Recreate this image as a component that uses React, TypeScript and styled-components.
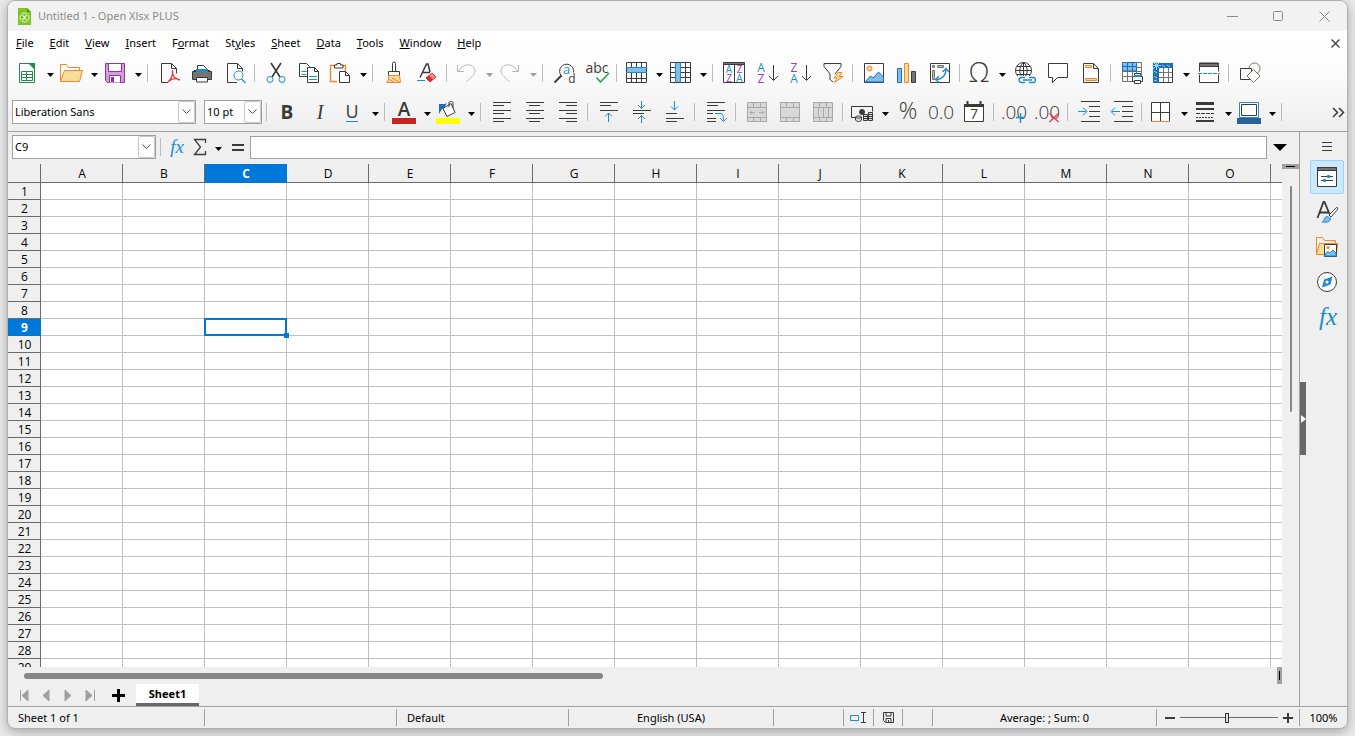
import React, { ReactNode } from "react";
import styled, { createGlobalStyle, css } from "styled-components";

const ink = "#3a3a38";
const blue = "#1e8bcd";
const accent = "#0078d7";
const line = "#a0a0a0";
const uiFont = `"Noto Sans", "Open Sans", sans-serif`;
const gridFont = `"Open Sans", "Noto Sans", sans-serif`;

const GlobalStyle = createGlobalStyle`
  * { box-sizing: border-box; }
  body {
    margin: 0;
    background: #ebebeb;
    color: #000;
    font-family: ${uiFont};
    font-size: 11px;
    line-height: 16px;
  }
  button, input, select { font: inherit; color: inherit; }
  button { background: none; border: 0; padding: 0; }
`;

const Desktop = styled.div`
  height: 100vh;
  min-height: 400px;
  padding: 0 7px 7px;
  overflow: hidden;
`;

const Window = styled.div`
  display: flex;
  flex-direction: column;
  height: 100%;
  border: 1px solid #b0b0b0;
  border-radius: 8px;
  background: #efefef;
  box-shadow: 0 3px 12px rgba(0, 0, 0, 0.3);
  overflow: hidden;
`;

const TitleBar = styled.header`
  display: flex;
  align-items: center;
  flex: none;
  height: 30px;
  padding-left: 10px;
  background: #f2f2f2;
  color: #8a8a8a;
`;

const Title = styled.h1`
  flex: 1;
  margin: 0 0 0 7px;
  font-size: 11px;
  font-weight: 400;
`;

const CaptionButton = styled.button`
  display: grid;
  place-items: center;
  width: 46px;
  height: 30px;
`;

const CommandArea = styled.div`
  flex: none;
  border-bottom: 1px solid ${line};
  background: linear-gradient(#fff, #fcfcfc 40%, #eeeeee);
`;

const MenuBar = styled.nav`
  display: flex;
  align-items: center;
  gap: 16px;
  height: 24px;
  padding: 0 7px 0 8px;
`;

const MenuItem = styled.button`
  height: 20px;
`;

const MenuClose = styled.button`
  display: grid;
  margin-left: auto;
`;

const Toolbar = styled.div<{ $tall?: boolean }>`
  display: flex;
  align-items: center;
  height: ${(p) => (p.$tall ? 40 : 36)}px;
  padding: ${(p) => (p.$tall ? "2px 2px 0 4px" : "0 2px 0 3px")};
`;

const ToolButton = styled.button`
  flex: none;
  display: flex;
  align-items: center;
  width: 33px;
  height: 32px;
  padding-left: 6px;
`;

const SplitButton = styled(ToolButton)<{ $off?: boolean }>`
  width: 44px;
  padding-left: 4px;
  gap: 8px;
  color: ${(p) => (p.$off ? "#a0a0a0" : "#000")};
`;

const Glyph = styled.svg`
  display: block;
  flex: none;
  width: 24px;
  height: 24px;
  fill: none;
  stroke: ${ink};
  overflow: visible;
  text { stroke: none; fill: ${ink}; text-anchor: middle; font-family: ${gridFont}; }
`;

const Mark = styled.svg`
  display: block;
  flex: none;
  fill: none;
  stroke: currentColor;
`;

const Arrow = styled.svg`
  display: block;
  flex: none;
  width: 7px;
  height: 4px;
  margin-top: 4px;
  fill: currentColor;
`;

const Separator = styled.span`
  flex: none;
  width: 8px;
  height: 18px;
  padding-left: 4px;
  &::before { content: ""; display: block; width: 1px; height: 100%; background: #bcbcbc; }
`;

const Combo = styled.div<{ $width: number }>`
  display: flex;
  flex: none;
  position: relative;
  width: ${(p) => p.$width}px;
  height: 24px;
  border: 1px solid #a0a0a0;
  background: #fff;
`;

const comboText = css`
  flex: 1;
  min-width: 0;
  width: 100%;
  padding: 0 2px;
  border: 0;
  outline: 0;
  background: transparent;
`;

const ComboSelect = styled.select`
  ${comboText}
  appearance: none;
`;

const ComboInput = styled.input`
  ${comboText}
`;

const ComboDrop = styled.span`
  position: absolute;
  top: 0;
  right: 0;
  display: grid;
  place-items: center;
  width: 17px;
  height: 100%;
  border: 1px solid #c8c8c8;
  border-radius: 2px;
  background: #fdfdfd;
  color: #555;
  pointer-events: none;
`;

const ComboGap = styled.span`
  flex: none;
  width: 8px;
`;

const Overflow = styled.button`
  display: grid;
  margin-left: auto;
`;

const Body = styled.div`
  display: flex;
  flex: 1;
  min-height: 0;
`;

const Workspace = styled.main`
  display: flex;
  flex-direction: column;
  flex: 1;
  min-width: 0;
`;

const FormulaBar = styled.div`
  display: flex;
  align-items: center;
  flex: none;
  height: 32px;
  padding: 0 6px 2px 4px;
`;

const FormulaButton = styled.button<{ $width: number; $start?: boolean }>`
  display: flex;
  flex: none;
  align-items: center;
  justify-content: ${(p) => (p.$start ? "flex-start" : "center")};
  gap: 3px;
  width: ${(p) => p.$width}px;
  height: 24px;
`;

const FormulaInput = styled.input`
  flex: 1;
  min-width: 0;
  height: 23px;
  padding: 0 4px;
  border: 1px solid #a0a0a0;
  outline: 0;
  background: #fff;
`;

const SheetArea = styled.div`
  display: flex;
  flex: 1;
  min-height: 0;
`;

const GridView = styled.div`
  flex: 1;
  min-width: 0;
  overflow: hidden;
  background: #fff;
`;

const Grid = styled.table`
  width: 100%;
  table-layout: fixed;
  border-spacing: 0;
  font-family: ${gridFont};
  font-size: 12px;
  line-height: 14px;
  th:last-child, td:last-child { border-right: 0; }
`;

const headCell = css<{ $on?: boolean }>`
  padding: 2px 0 0 1px;
  border: solid #6a6a6a;
  border-width: 0 1px 1px 0;
  background: #efefef;
  text-align: center;
  font-weight: 400;
  ${(p) => p.$on && css`
    border-color: ${accent};
    background: ${accent};
    color: #fff;
    font-weight: 700;
  `}
`;

const ColumnHead = styled.th<{ $on?: boolean }>`
  ${headCell}
  height: 19px;
`;

const RowHead = styled.th<{ $on?: boolean }>`
  ${headCell}
  height: 17px;
`;

const Cell = styled.td<{ $on?: boolean }>`
  position: ${(p) => (p.$on ? "relative" : "static")};
  padding: 0;
  border: solid #c0c0c0;
  border-width: 0 1px 1px 0;
`;

const CellCursor = styled.div`
  position: absolute;
  inset: -1px;
  border: 2px solid ${accent};
  &::after {
    content: "";
    position: absolute;
    right: -4px;
    bottom: -4px;
    width: 5px;
    height: 5px;
    background: ${accent};
  }
`;

const VerticalScroll = styled.div`
  display: flex;
  flex-direction: column;
  flex: none;
  align-items: center;
  width: 17px;
`;

const SplitTop = styled.div`
  display: grid;
  place-items: center;
  width: 100%;
  height: 5px;
  margin-bottom: 17px;
  background: #a0a0a0;
  &::before { content: ""; width: 9px; height: 1px; background: #000; }
`;

const VerticalThumb = styled.div`
  width: 2px;
  height: 45%;
  border-radius: 1px;
  background: #868686;
`;

const HorizontalScroll = styled.div`
  display: flex;
  align-items: center;
  flex: none;
  height: 17px;
  padding: 0 17px 0 16px;
`;

const HorizontalThumb = styled.div`
  width: 46%;
  height: 6px;
  border-radius: 3px;
  background: #868686;
`;

const SplitSide = styled.div`
  display: grid;
  place-items: center;
  width: 5px;
  height: 17px;
  margin-left: auto;
  background: #a0a0a0;
  &::before { content: ""; width: 1px; height: 9px; background: #000; }
`;

const TabBar = styled.div`
  display: flex;
  align-items: center;
  flex: none;
  height: 22px;
  padding-left: 5px;
`;

const TabNav = styled.button`
  display: grid;
  place-items: center;
  width: 22px;
  height: 22px;
  color: #a0a0a0;
`;

const AddSheet = styled(TabNav)`
  width: 35px;
  color: #000;
`;

const SheetTab = styled.button`
  width: 63px;
  height: 22px;
  padding-top: 1px;
  border-bottom: 3px solid #686868;
  background: #fff;
  font-weight: 700;
  line-height: 18px;
`;

const Sidebar = styled.aside`
  position: relative;
  display: flex;
  flex-direction: column;
  align-items: center;
  flex: none;
  gap: 1px;
  width: 48px;
  padding: 0 0 0 7px;
  border-left: 1px solid ${line};
`;

const SideMenu = styled.button`
  display: grid;
  place-items: center;
  width: 34px;
  height: 27px;
  padding-top: 2px;
`;

const SideButton = styled.button<{ $on?: boolean }>`
  display: grid;
  place-items: center;
  width: 34px;
  height: 34px;
  border: 1px solid ${(p) => (p.$on ? "#99d1ff" : "transparent")};
  border-radius: 2px;
  background: ${(p) => (p.$on ? "#cce8ff" : "transparent")};
`;

const SideHandle = styled.button`
  position: absolute;
  left: 0;
  top: 250px;
  display: grid;
  place-items: center;
  width: 6px;
  height: 73px;
  background: #686868;
  color: #fff;
`;

const StatusBar = styled.footer`
  display: flex;
  align-items: center;
  flex: none;
  height: 22px;
  border-top: 1px solid ${line};
`;

const StatusCell = styled.div<{ $width?: number; $align?: string; $last?: boolean }>`
  display: flex;
  align-items: center;
  justify-content: ${(p) => p.$align || "center"};
  ${(p) => (p.$width ? `flex: 0 1 ${p.$width}px;` : "flex: 1;")}
  min-width: 0;
  height: 17px;
  padding: 0 ${(p) => (p.$align ? 10 : 0)}px;
  border-right: ${(p) => (p.$last ? "0" : `1px solid ${line}`)};
  white-space: nowrap;
`;

const ZoomCell = styled(StatusCell)`
  gap: 5px;
  padding: 0 6px 0 8px;
`;

const ZoomSlider = styled.input`
  flex: 1;
  min-width: 0;
  height: 12px;
  margin: 0;
  appearance: none;
  background: linear-gradient(#6b6b6b, #6b6b6b) center / 100% 1px no-repeat;
  &::-webkit-slider-thumb {
    appearance: none;
    width: 4px;
    height: 10px;
    border: 1px solid #333;
    background: #ddd;
  }
`;

/* ---------- icons, drawn on a 24px canvas ---------- */

const alignRows = [2.5, 5.5, 10.5, 13.5, 18.5, 21.5];

function alignPath(kind: "left" | "center" | "right") {
  return alignRows
    .map((y, i) => {
      const w = i % 2 ? 11 : 18;
      const x = kind === "left" ? 3 : kind === "right" ? 21 - w : 3 + Math.floor((18 - w) / 2);
      return `M${x} ${y}h${w}`;
    })
    .join("");
}

const violet = "#a33bae";

const icons: Record<string, ReactNode> = {
  newSheet: (
    <>
      <path d="M4.500 2.500h10l5 5v14h-15z" stroke="#1f8b4c" fill="#fff" />
      <path d="M13 2h7v7z" fill="#1f8b4c" stroke="none" />
      <path d="M6.500 10.500h11v9h-11zM6.500 13.500h11M6.500 16.500h11M11.500 10.500v9" stroke="#1f8b4c" />
    </>
  ),
  open: (
    <>
      <path d="M1.500 20.500v-17h6l2 3h11v3" stroke="#ed8733" />
      <path d="M5.500 9.500h18l-3 11h-19z" fill="#fbdd98" stroke="#ed8733" />
    </>
  ),
  save: (
    <>
      <path d="M2.500 2.500h19v19h-17l-2-2z" fill="#d59adf" stroke="#92349c" />
      <path d="M5.500 2.500h13v8h-13z" fill="#fff" stroke="#92349c" />
      <path d="M6.500 21.500v-7h11v7" fill="#fff" stroke="#92349c" />
      <path d="M8 16h3v5h-3z" fill="#92349c" stroke="none" />
    </>
  ),
  pdf: (
    <>
      <path d="M11 21.500h-6.500v-19h10l5 5v5M14.500 2.500v5h5" />
      <path d="M15.500 9v3c0 4-2.500 7-4.500 9M15.500 12c.5 3.500 3.500 6 7.500 7M11.500 20.500c3-3 7-3.500 11-2" stroke="#e8393f" strokeWidth="1.300" />
    </>
  ),
  print: (
    <>
      <path d="M7.500 10v-5.500h6l3 3v2.500" fill="#fff" />
      <path d="M4 9.500h16M2.500 10.500h19v8h-19z" fill="#75756f" />
      <path d="M6 8h12v3h-12z" fill={blue} stroke="none" />
      <path d="M6.500 16.500h11v4.500h-11z" fill="#fff" />
    </>
  ),
  preview: (
    <>
      <path d="M14 21.500h-9.500v-19h10l5 5v3M14.500 2.500v5h5" />
      <circle cx="15.500" cy="14.500" r="4.500" fill="#fff" stroke={blue} />
      <path d="M18.500 18l4 4" stroke={blue} strokeWidth="1.300" />
    </>
  ),
  cut: (
    <>
      <path d="M7 2l9 14M17 2l-9 14" strokeWidth="1.600" />
      <circle cx="6" cy="18.500" r="3" stroke={blue} />
      <circle cx="18" cy="18.500" r="3" stroke={blue} />
    </>
  ),
  copy: (
    <>
      <path d="M10 15.500h-7.500v-13h7l3 3v2" fill="#fff" />
      <path d="M4.500 10.500h5M4.500 13.500h5" stroke={blue} />
      <path d="M10.500 6.500h7l4 4v11h-11z" fill="#fff" />
      <path d="M17.500 6.500v4h4" />
      <path d="M12 15.500h8M12 18.500h8" stroke={blue} />
    </>
  ),
  paste: (
    <>
      <path d="M9 20.500h-6.500v-16h15v6" stroke="#ed8733" fill="#fbfbfb" strokeWidth="1.400" />
      <path d="M6.500 7v-3h2.500v-1.500h3.500v1.500h2.500v3z" fill="#fff" />
      <path d="M11.500 10.500h6l4 4v7h-10z" fill="#fff" />
      <path d="M17.500 10.500v4h4" />
    </>
  ),
  brush: (
    <>
      <path d="M10.500 10.500v-8a1.500 1.500 0 0 1 3 0v8" fill="#fff" />
      <path d="M6.500 14.500v-4h11v4" fill="#fff" />
      <path d="M6.500 14.500h11l1 7h-14l2-3z" fill="#fbdd98" stroke="#ed8733" />
      <path d="M6 18l6 3M10 17l7 4" stroke="#ed8733" />
    </>
  ),
  clear: (
    <>
      <path d="M5 16.500L11.500 3h1.500L15 11M8 11.500h7" strokeWidth="1.500" />
      <path d="M2 19.500h8" stroke={blue} />
      <path d="M11 17l6-5 4 4-6 5z" fill="#f4848a" stroke="#e23a3f" />
      <path d="M11 17l3-2.500 4 4-3 2.500z" fill="#dd2830" stroke="none" />
    </>
  ),
  undo: <path d="M3.500 4v6.500h6.500M3.500 10.500l5.500-5c4.500-3.500 12-1.500 12 4.500 0 2-1 3.500-2 4.500l-6.500 6.500" stroke="#b8b8b8" />,
  redo: <path d="M20.500 4v6.500h-6.500M20.500 10.500l-5.500-5c-4.500-3.500-12-1.500-12 4.500 0 2 1 3.500 2 4.500l6.500 6.500" stroke="#b8b8b8" />,
  find: (
    <>
      <path d="M10 15.500a7 7 0 1 1 11.500-4" />
      <path d="M9.500 14.500l-7 7" strokeWidth="2" />
      <text x="14.500" y="13" fontSize="13" style={{ fill: blue }}>a</text>
      <text x="20" y="22" fontSize="12">d</text>
    </>
  ),
  spell: (
    <>
      <text x="12" y="12" fontSize="14">abc</text>
      <path d="M11.500 16.500l4 4.500 8.500-9" stroke="#26a65b" strokeWidth="1.600" />
    </>
  ),
  rows: (
    <>
      <path d="M2.500 1.500h20v20h-20zM2.500 17.500h20M7.500 2v20M12.500 2v20M17.500 2v20" />
      <path d="M3 7h19v5h-19z" fill="#7fbdec" stroke="none" />
      <path d="M2 6.500h21M2 11.500h21" stroke={blue} />
    </>
  ),
  cols: (
    <>
      <path d="M2.500 1.500h20v20h-20zM17.500 2v20M2 6.500h20M2 11.500h20M2 16.500h20" />
      <path d="M8 2h5v19h-5z" fill="#7fbdec" stroke="none" />
      <path d="M7.500 1v21M12.500 1v21" stroke={blue} />
    </>
  ),
  sort: (
    <>
      <path d="M1.500 2.500h21v19h-21zM12.500 4v18" fill="#fff" />
      <path d="M1.500 1.500h21v2h-21z" fill="#75756f" />
      <text fontSize="10">
        <tspan x="7" y="12" fill={blue}>A</tspan>
        <tspan x="17.500" y="12" fill={violet}>Z</tspan>
        <tspan x="7" y="20.500" fill={violet}>Z</tspan>
        <tspan x="17.500" y="20.500" fill={blue}>A</tspan>
      </text>
    </>
  ),
  sortAsc: (
    <>
      <text fontSize="12">
        <tspan x="6" y="10.500" fill={blue}>A</tspan>
        <tspan x="6" y="22" fill={violet}>Z</tspan>
      </text>
      <path d="M18.500 4v15M14 15l4.500 4.500 4.500-4.500" />
    </>
  ),
  sortDesc: (
    <>
      <text fontSize="12">
        <tspan x="6" y="10.500" fill={violet}>Z</tspan>
        <tspan x="6" y="22" fill={blue}>A</tspan>
      </text>
      <path d="M18.500 4v15M14 15l4.500 4.500 4.500-4.500" />
    </>
  ),
  filter: (
    <>
      <path d="M14 13l6-7.500v-3h-17v3l6 7.500v6" />
      <path d="M9.500 19l2.500 2" />
      <path d="M17 11.500h4l-3 4h4l-8.500 6 2.500-4.500h-3z" fill="#fbdd98" stroke="#ed8733" />
    </>
  ),
  image: (
    <>
      <path d="M2.500 2.500h19v19h-19z" fill="#fff" />
      <circle cx="7.500" cy="7.500" r="2.500" fill="#fbcf8a" stroke="#ed8733" />
      <path d="M3 21l5.500-6 2.500 2 5.500-6 5 5v5z" fill="#7fbdec" stroke="#1b6db5" />
    </>
  ),
  chart: (
    <>
      <path d="M2.500 7.500h4v14h-4z" fill="#7fbdec" stroke="#1b6db5" />
      <path d="M9.500 2.500h4v19h-4z" fill="#fbdd98" stroke="#ed8733" />
      <path d="M16.500 10.500h4v11h-4z" fill="#75756f" />
    </>
  ),
  pivot: (
    <>
      <path d="M2.500 2.500h19v19h-19z" fill="#fff" />
      <path d="M4.500 4.500h2v2h-2zM9.500 4.500h6v2h-6zM4.500 9.500h2v9h-2z" stroke="#75756f" fill="#bbb" />
      <path d="M8 18.500c6 0 10-4 10-10.500M14.500 11l3.500-3.500 3 3.500M11 15l-3.500 3.500 3.500 3" stroke={blue} strokeWidth="1.300" />
    </>
  ),
  omega: <text x="12" y="21" fontSize="27" fontWeight="300">Ω</text>,
  link: (
    <>
      <circle cx="10.500" cy="9.500" r="8" />
      <path d="M2.500 9.500h16M10.500 1.500v16M4 5.500h13M4 13.500h13M10.500 1.500c-5 4-5 12 0 16M10.500 1.500c5 4 5 12 0 16" />
      <path d="M5 15h18v7h-18z" fill="#fafafa" stroke="none" />
      <path d="M12 16.500h-3.500a2.500 2.500 0 0 0 0 5h3.500M16 16.500h4a2.500 2.500 0 0 1 0 5h-4M10 19h9" stroke={blue} strokeWidth="1.300" />
    </>
  ),
  comment: <path d="M2.500 2.500h19v14h-10l-5 5v-5h-4z" fill="#fff" />,
  header: (
    <>
      <path d="M4.500 2.500h10l5 5v14h-15z" fill="#fff" />
      <path d="M14.500 2.500v5h5" />
      <path d="M6.500 4.500h6v2h-6zM6.500 17.500h11v2h-11z" fill="#fbdd98" stroke="#ed8733" />
    </>
  ),
  printArea: (
    <>
      <path d="M2.500 1.500h19v19h-19zM2.500 15.500h19M7.500 10v10M12.500 10v10M16.500 2v18M3 10.500h18M3 6.500h18" stroke="#75756f" fill="#fff" />
      <path d="M2.500 1.500h14v8.500h-14z" fill="#7fbdec" stroke="#1b6db5" />
      <path d="M2.500 5.500h14M7.500 1.500v8.500M12.500 1.500v8.500" stroke="#1b6db5" />
      <path d="M14.500 16v-3.500h6v3.500M12.500 15.500h10v5h-10z" fill="#fff" />
      <path d="M14 14h7v2h-7z" fill={blue} stroke="none" />
      <path d="M14.500 19.500h6v3h-6z" fill="#fff" />
    </>
  ),
  freeze: (
    <>
      <path d="M7 6.500h14.500v15h-14.500z" fill="#fff" />
      <path d="M12.500 7v14M17.500 7v14M8 11.500h13M8 16.500h13" stroke="#75756f" />
      <path d="M2 2h20v5h-14v15h-6z" fill="#1a70bb" stroke="none" />
      <path d="M11 4l3 2M16 4l3 2M3 10l3 2M3 15l3 2M3 20l3-1" stroke="#9fd0f5" />
      <path d="M5.500 0v9M1 4.500h9M2 1l7 7M9 1l-7 7" stroke="#8fd0ff" />
    </>
  ),
  split: (
    <>
      <path d="M2.500 10.500v-8.500h19v8.500M2.500 13.500v8h19v-8" fill="#fff" />
      <path d="M2.500 2.500h19v3h-19z" fill="#75756f" />
      <path d="M1 12.500h22" stroke={blue} strokeDasharray="4 1" />
    </>
  ),
  shapes: (
    <>
      <circle cx="16.500" cy="7.500" r="5.500" stroke="#75756f" fill="#fafafa" />
      <path d="M2.500 7.500h11v11h-11z" fill="#fafafa" />
      <path d="M15.500 8.500l6.500 6.500-6.500 6.500-6.500-6.500z" stroke="#75756f" fill="#fafafa" />
    </>
  ),
  bold: <text x="11" y="19" fontSize="19" fontWeight="700">B</text>,
  italic: <text x="11" y="19" fontSize="20" style={{ fontFamily: '"Liberation Serif", serif', fontStyle: "italic" }}>I</text>,
  underline: (
    <>
      <text x="12" y="18" fontSize="18">U</text>
      <path d="M6 21.500h12" stroke={blue} />
    </>
  ),
  fontColor: (
    <>
      <text x="12" y="16" fontSize="19" fontWeight="600">A</text>
      <path d="M0 18h24v6h-24z" fill="#c9211e" stroke="none" />
    </>
  ),
  fillColor: (
    <>
      <path d="M0 18h24v6h-24z" fill="#ffff00" stroke="none" />
      <path d="M3 14v-10h6l2-1-3 5-2 1z" fill="#1b6db5" stroke="none" />
      <path d="M7 8.500l8-5 4 9-8 4z" fill="#fff" />
      <path d="M13 7v-4c0-2 4-2 4 0v5" />
    </>
  ),
  alignLeft: <path d={alignPath("left")} />,
  alignCenter: <path d={alignPath("center")} />,
  alignRight: <path d={alignPath("right")} />,
  alignTop: (
    <>
      <path d="M3 2.500h18M3 5.500h11M3 10.500h18" />
      <path d="M11.500 22v-9M8 16.500l3.500-3.500 3.500 3.500" stroke={blue} />
    </>
  ),
  alignMiddle: (
    <>
      <path d="M3 10.500h18M3 13.500h11" />
      <path d="M11.500 1v7M8 5l3.500 3.500 3.500-3.500M11.500 23v-7M8 19l3.500-3.500 3.500 3.500" stroke={blue} />
    </>
  ),
  alignBottom: (
    <>
      <path d="M3 13.500h11M3 18.500h18M3 21.500h11" />
      <path d="M11.500 1v9M8 6.500l3.500 3.500 3.500-3.500" stroke={blue} />
    </>
  ),
  wrap: (
    <>
      <path d="M3 2.500h18M3 5.500h11M3 10.500h18M3 13.500h6M3 18.500h9M3 21.500h9" />
      <path d="M11 13.500h5c3 0 3.500 2 3.500 7M16 18l3.500 3.500 3.500-3.500" stroke={blue} />
    </>
  ),
  merge: (
    <>
      <path d="M2.500 2.500h19v19h-19z" fill="#d8d8d8" stroke="#a8a8a8" />
      <path d="M2.500 7.500h19M2.500 17.500h19M8.500 3v4M15.500 3v4M8.500 18v3M15.500 18v3M5 12.500h5M14 12.500h5M7 10.500l-2 2 2 2M17 10.500l2 2-2 2" stroke="#a8a8a8" />
    </>
  ),
  mergeCells: (
    <>
      <path d="M2.500 2.500h19v19h-19z" fill="#d8d8d8" stroke="#a8a8a8" />
      <path d="M2.500 7.500h19M2.500 17.500h19M8.500 3v4M15.500 3v4M8.500 18v3M15.500 18v3" stroke="#a8a8a8" />
    </>
  ),
  splitCells: (
    <>
      <path d="M2.500 2.500h19v19h-19z" fill="#d8d8d8" stroke="#a8a8a8" />
      <path d="M2.500 7.500h19M2.500 17.500h19M8.500 3v4M15.500 3v4M8.500 18v3M15.500 18v3M7.500 8v10M12.500 8v10M17.500 8v10" stroke="#a8a8a8" />
    </>
  ),
  currency: (
    <>
      <path d="M5 17.500h-3.500v-11h21v5" />
      <circle cx="12" cy="12" r="2.500" fill={ink} />
      <path d="M5.500 17v3c1 2 5 2 6 0v-3c-1-1.500-5-1.500-6 0c1 1.500 5 1.500 6 0M13.500 14.500v6h4v-6zM13.500 16.500h4M13.500 18.500h4M18.500 12.500v8h4v-8zM18.500 14.500h4M18.500 16.500h4M18.500 18.500h4" fill="#ddd" />
    </>
  ),
  percent: <text x="12" y="19" fontSize="23" fontWeight="300">%</text>,
  number: <text x="12" y="19" fontSize="19" fontWeight="300">0.0</text>,
  date: (
    <>
      <path d="M2.500 4.500h19v17h-19z" fill="#fff" />
      <path d="M2 4h20v3h-20z" fill={ink} stroke="none" />
      <path d="M5.500 1v5M18.500 1v5" stroke={ink} strokeWidth="2" />
      <text x="12" y="19" fontSize="14">7</text>
    </>
  ),
  addDecimal: (
    <>
      <text x="11" y="19" fontSize="19" fontWeight="300">.00</text>
      <path d="M13 17.500h9M17.500 13v10" stroke={blue} strokeWidth="1.400" />
    </>
  ),
  removeDecimal: (
    <>
      <text x="11" y="19" fontSize="19" fontWeight="300">.00</text>
      <path d="M13.500 13.500l9 8.500M22.500 13.500l-9 8.500" stroke="#e8393f" strokeWidth="1.400" />
    </>
  ),
  indent: (
    <>
      <path d="M4 1.500h19M12 6.500h11M12 11.500h11M12 16.500h11M4 21.500h19" />
      <path d="M1 11.500h8M6 7.500l4 4-4 4" stroke={blue} />
    </>
  ),
  outdent: (
    <>
      <path d="M4 1.500h19M12 6.500h11M12 11.500h11M12 16.500h11M4 21.500h19" />
      <path d="M2 11.500h8M5 7.500l-4 4 4 4" stroke={blue} />
    </>
  ),
  borders: (
    <>
      <path d="M2.500 21v-18.500h18v18.500M2.500 12.500h18M11.500 3v18" fill="#fff" />
      <path d="M2 21.500h19" stroke="#ed8733" />
    </>
  ),
  lineStyle: (
    <>
      <path d="M3 3.500h18" strokeWidth="3" />
      <path d="M3 9h18" strokeWidth="2" />
      <path d="M3 13.500h18" strokeDasharray="4 1" />
      <path d="M3 17.500h18" strokeDasharray="2 1" />
      <path d="M3 21h18" strokeWidth="2" />
    </>
  ),
  borderColor: (
    <>
      <path d="M2.500 2.500h19v15h-19z" fill="#fff" stroke={blue} />
      <path d="M4.500 4.500h15v11h-15z" fill="#fff" />
      <path d="M0 18h24v6h-24z" fill="#2a6099" stroke="none" />
    </>
  ),
  properties: (
    <>
      <path d="M2.500 2.500h19v19h-19z" fill="#fff" />
      <path d="M2.500 2.500h19v3h-19z" fill="#75756f" />
      <path d="M6 11.500h12M6 15.500h12" />
      <path d="M12.500 10.500h2v2h-2zM8.500 14.500h2v2h-2z" fill={blue} stroke={blue} />
    </>
  ),
  styles: (
    <>
      <path d="M2.500 18l6-16h1l5 12M5 12.500h8" strokeWidth="1.800" />
      <path d="M14 15l7.500-7.500c1.500-.5 1.500 1 1 2l-6.500 7.500z" fill="#fff" />
      <path d="M7 22c3-1 1-5 5.500-5.500l3 2c0 4-5 4-8.500 3.500z" fill="#7fbdec" stroke={blue} />
    </>
  ),
  gallery: (
    <>
      <path d="M1.500 19.500v-17h6l2 3h11v3" stroke="#ed8733" />
      <path d="M4.500 8.500h18.500l-2 11h-19.500z" fill="#fbdd98" stroke="#ed8733" />
      <path d="M9.500 9.500h12v12h-12z" fill="#fff" />
      <circle cx="13" cy="12.500" r="1.500" fill="#ed8733" stroke="none" />
      <path d="M10 21v-2l3-2.500 2 1.500 3-3 3 3v3z" fill="#7fbdec" stroke={blue} />
    </>
  ),
  navigator: (
    <>
      <circle cx="12" cy="12" r="9.500" fill="#fff" />
      <path d="M17.500 6.500l-2 8-8.500 3 2-8z" fill={blue} stroke="none" />
      <circle cx="12" cy="12" r="1.500" fill="#fff" stroke="none" />
    </>
  ),
  functions: (
    <text x="13" y="20" fontSize="25" style={{ fill: blue, fontFamily: '"Liberation Serif", serif', fontStyle: "italic" }}>fx</text>
  ),
};

const Icon = ({ name }: { name: string }) => (
  <Glyph viewBox="0 0 24 24" aria-hidden="true">{icons[name]}</Glyph>
);

const Down = () => (
  <Arrow viewBox="0 0 7 4" aria-hidden="true"><path d="M0 0h7l-3.500 4z" /></Arrow>
);

const Chevron = () => (
  <Mark width="9" height="6" viewBox="0 0 9 6" aria-hidden="true"><path d="M.5.5l4 4 4-4" /></Mark>
);

type Tool = { id: string; label: string; drop?: boolean; off?: boolean } | "|";

const t = (id: string, label: string, drop = false, off = false): Tool => ({ id, label, drop, off });

const standardTools: Tool[] = [
  t("newSheet", "New", true), t("open", "Open", true), t("save", "Save", true), "|",
  t("pdf", "Export as PDF"), t("print", "Print"), t("preview", "Print Preview"), "|",
  t("cut", "Cut"), t("copy", "Copy"), t("paste", "Paste", true), "|",
  t("brush", "Clone Formatting"), t("clear", "Clear Formatting"), "|",
  t("undo", "Undo", true, true), t("redo", "Redo", true, true), "|",
  t("find", "Find and Replace"), t("spell", "Spelling"), "|",
  t("rows", "Row", true), t("cols", "Column", true), "|",
  t("sort", "Sort"), t("sortAsc", "Sort Ascending"), t("sortDesc", "Sort Descending"), t("filter", "AutoFilter"), "|",
  t("image", "Insert Image"), t("chart", "Insert Chart"), t("pivot", "Pivot Table"), "|",
  t("omega", "Special Character", true), t("link", "Hyperlink"), t("comment", "Comment"), t("header", "Headers and Footers"), "|",
  t("printArea", "Define Print Area"), t("freeze", "Freeze Rows and Columns", true), t("split", "Split Window"), "|",
  t("shapes", "Draw Functions"),
];

const formatTools: Tool[] = [
  "|", t("bold", "Bold"), t("italic", "Italic"), t("underline", "Underline", true), "|",
  t("fontColor", "Font Color", true), t("fillColor", "Background Color", true), "|",
  t("alignLeft", "Align Left"), t("alignCenter", "Align Center"), t("alignRight", "Align Right"), "|",
  t("alignTop", "Align Top"), t("alignMiddle", "Center Vertically"), t("alignBottom", "Align Bottom"), "|",
  t("wrap", "Wrap Text"), "|",
  t("merge", "Merge and Center"), t("mergeCells", "Merge Cells"), t("splitCells", "Split Cells"), "|",
  t("currency", "Currency", true), t("percent", "Percent"), t("number", "Number"), t("date", "Date"), "|",
  t("addDecimal", "Add Decimal Place"), t("removeDecimal", "Delete Decimal Place"), "|",
  t("indent", "Increase Indent"), t("outdent", "Decrease Indent"), "|",
  t("borders", "Borders", true), t("lineStyle", "Border Style", true), t("borderColor", "Border Color", true), "|",
];

const Tools = ({ items }: { items: Tool[] }) => (
  <>
    {items.map((item, i) => {
      if (item === "|") return <Separator key={i} />;
      if (item.drop) {
        return (
          <SplitButton key={item.id} type="button" aria-label={item.label} $off={item.off}>
            <Icon name={item.id} />
            <Down />
          </SplitButton>
        );
      }
      return (
        <ToolButton key={item.id} type="button" aria-label={item.label}>
          <Icon name={item.id} />
        </ToolButton>
      );
    })}
  </>
);

/* menu titles with the index of their access key */
const menus: [string, number][] = [
  ["File", 0], ["Edit", 0], ["View", 0], ["Insert", 0], ["Format", 1], ["Styles", 2],
  ["Sheet", 0], ["Data", 0], ["Tools", 0], ["Window", 0], ["Help", 0],
];

const columns = "ABCDEFGHIJKLMNO".split("");
const rows = Array.from({ length: 29 }, (_, i) => i + 1);
const active = { column: "C", row: 9 };

const sidePanels = [
  ["properties", "Properties"], ["styles", "Styles"], ["gallery", "Gallery"],
  ["navigator", "Navigator"], ["functions", "Functions"],
];

const tabMoves = [
  ["First sheet", "M3.500 2v11M11 2v11l-6-5.500z"],
  ["Previous sheet", "M10 2v11l-6-5.500z"],
  ["Next sheet", "M4 2v11l6-5.500z"],
  ["Last sheet", "M3 2v11l6-5.500zM11.500 2v11"],
];

export default function App() {
  return (
    <>
      <GlobalStyle />
      <Desktop>
        <Window>
          <TitleBar>
            <svg width="13" height="17" viewBox="0 0 13 17" aria-hidden="true">
              <path d="M0 0h9l4 4v13h-13z" fill="#7cc623" />
              <path d="M9 0l4 4h-4z" fill="#4f9a12" />
              <circle cx="6.500" cy="9.500" r="4.500" fill="none" stroke="#e9f7d8" />
              <path d="M4.500 7l4 5M8.500 7l-4 5" stroke="#fff" strokeWidth="1.200" />
            </svg>
            <Title>Untitled 1 - Open Xlsx PLUS</Title>
            <CaptionButton type="button" aria-label="Minimize">
              <Mark width="11" height="11"><path d="M0 5.500h11" /></Mark>
            </CaptionButton>
            <CaptionButton type="button" aria-label="Maximize">
              <Mark width="11" height="11"><rect x=".5" y=".5" width="9" height="9" rx="1" /></Mark>
            </CaptionButton>
            <CaptionButton type="button" aria-label="Close">
              <Mark width="11" height="11"><path d="M.5.5l10 10M10.500.5l-10 10" /></Mark>
            </CaptionButton>
          </TitleBar>

          <CommandArea>
            <MenuBar>
              {menus.map(([name, key]) => (
                <MenuItem key={name} type="button">
                  {name.slice(0, key)}<u>{name[key]}</u>{name.slice(key + 1)}
                </MenuItem>
              ))}
              <MenuClose type="button" aria-label="Close document">
                <Mark width="9" height="9"><path d="M.5.5l8 8M8.500.5l-8 8" stroke={ink} strokeWidth="1.200" /></Mark>
              </MenuClose>
            </MenuBar>
            <Toolbar><Tools items={standardTools} /></Toolbar>
            <Toolbar $tall>
              <Combo $width={184}>
                <ComboSelect aria-label="Font name" defaultValue="Liberation Sans"><option>Liberation Sans</option></ComboSelect>
                <ComboDrop><Chevron /></ComboDrop>
              </Combo>
              <ComboGap />
              <Combo $width={58}>
                <ComboSelect aria-label="Font size" defaultValue="10 pt"><option>10 pt</option></ComboSelect>
                <ComboDrop><Chevron /></ComboDrop>
              </Combo>
              <Tools items={formatTools} />
              <Overflow type="button" aria-label="More">
                <Mark width="13" height="11"><path d="M1 1l4.500 4.500-4.500 4.500M7 1l4.500 4.500-4.500 4.500" stroke={ink} strokeWidth="1.500" /></Mark>
              </Overflow>
            </Toolbar>
          </CommandArea>

          <Body>
            <Workspace>
              <FormulaBar>
                <Combo $width={144}>
                  <ComboInput aria-label="Name box" defaultValue="C9" />
                  <ComboDrop><Chevron /></ComboDrop>
                </Combo>
                <Separator />
                <FormulaButton type="button" aria-label="Function wizard" $width={24}>
                  <Glyph viewBox="0 0 24 24">
                    <text x="13" y="18" fontSize="19" style={{ fill: blue, fontFamily: '"Liberation Serif", serif', fontStyle: "italic" }}>fx</text>
                  </Glyph>
                </FormulaButton>
                <FormulaButton type="button" aria-label="Select function" $width={38} $start>
                  <Glyph viewBox="0 0 24 24"><path d="M17.500 8v-3.500h-11l6 7.500-6 7.500h11v-3.500" strokeWidth="1.300" /></Glyph>
                  <Down />
                </FormulaButton>
                <FormulaButton type="button" aria-label="Formula" $width={24}>
                  <Glyph viewBox="0 0 24 24"><path d="M6 10h12M6 15h12" strokeWidth="2" /></Glyph>
                </FormulaButton>
                <FormulaInput aria-label="Input line" />
                <FormulaButton type="button" aria-label="Expand formula bar" $width={26}>
                  <Mark width="14" height="7"><path d="M0 0h14l-7 7z" fill="#000" stroke="none" /></Mark>
                </FormulaButton>
              </FormulaBar>

              <SheetArea>
                <GridView>
                  <Grid>
                    <colgroup>
                      <col width="33" />
                      {columns.map((c) => <col key={c} width="82" />)}
                      <col />
                    </colgroup>
                    <thead>
                      <tr>
                        <ColumnHead aria-label="Select all" />
                        {columns.map((c) => (
                          <ColumnHead key={c} scope="col" $on={c === active.column}>{c}</ColumnHead>
                        ))}
                        <ColumnHead />
                      </tr>
                    </thead>
                    <tbody>
                      {rows.map((r) => (
                        <tr key={r}>
                          <RowHead scope="row" $on={r === active.row}>{r}</RowHead>
                          {columns.map((c) => {
                            const on = r === active.row && c === active.column;
                            return <Cell key={c} $on={on}>{on && <CellCursor />}</Cell>;
                          })}
                          <Cell />
                        </tr>
                      ))}
                    </tbody>
                  </Grid>
                </GridView>
                <VerticalScroll>
                  <SplitTop />
                  <VerticalThumb />
                </VerticalScroll>
              </SheetArea>

              <HorizontalScroll>
                <HorizontalThumb />
                <SplitSide />
              </HorizontalScroll>
              <TabBar>
                {tabMoves.map(([label, d]) => (
                  <TabNav key={label} type="button" aria-label={label}>
                    <Mark width="15" height="15"><path d={d} fill="currentColor" /></Mark>
                  </TabNav>
                ))}
                <AddSheet type="button" aria-label="Add sheet">
                  <Mark width="13" height="13"><path d="M0 6.500h13M6.500 0v13" strokeWidth="3" /></Mark>
                </AddSheet>
                <SheetTab type="button">Sheet1</SheetTab>
              </TabBar>
            </Workspace>

            <Sidebar>
              <SideMenu type="button" aria-label="Sidebar settings">
                <Mark width="10" height="9"><path d="M0 .5h10M0 4.500h10M0 8.500h10" stroke={ink} /></Mark>
              </SideMenu>
              {sidePanels.map(([id, label], i) => (
                <SideButton key={id} type="button" aria-label={label} $on={i === 0}><Icon name={id} /></SideButton>
              ))}
              <SideHandle type="button" aria-label="Hide sidebar">
                <Mark width="5" height="8"><path d="M0 0l5 4-5 4z" fill="#fff" stroke="none" /></Mark>
              </SideHandle>
            </Sidebar>
          </Body>

          <StatusBar>
            <StatusCell $width={197} $align="flex-start">Sheet 1 of 1</StatusCell>
            <StatusCell $width={192} />
            <StatusCell $width={172} $align="flex-start">Default</StatusCell>
            <StatusCell $width={205}>English (USA)</StatusCell>
            <StatusCell $width={70} />
            <StatusCell $width={30}>
              <Mark width="17" height="12"><path d="M.5 3.500h8v5h-8z" stroke={blue} /><path d="M11 .5h5M13.500 1v9M11 10.500h5" stroke={ink} /></Mark>
            </StatusCell>
            <StatusCell $width={29}>
              <Mark width="11" height="11"><path d="M.5.5h10v10h-8l-2-2zM3 .5v3.500h5v-3.500M3 10.500v-4h5v4M5.500 8v2" stroke={ink} /></Mark>
            </StatusCell>
            <StatusCell $width={30} />
            <StatusCell>Average: ; Sum: 0</StatusCell>
            <ZoomCell $width={143}>
              <button type="button" aria-label="Zoom out">
                <Mark width="10" height="10"><path d="M0 5h10" strokeWidth="2" stroke={ink} /></Mark>
              </button>
              <ZoomSlider type="range" aria-label="Zoom" min="0" max="100" defaultValue="48" />
              <button type="button" aria-label="Zoom in">
                <Mark width="10" height="10"><path d="M0 5h10M5 0v10" strokeWidth="2" stroke={ink} /></Mark>
              </button>
            </ZoomCell>
            <StatusCell $width={47} $last>100%</StatusCell>
          </StatusBar>
        </Window>
      </Desktop>
    </>
  );
}
